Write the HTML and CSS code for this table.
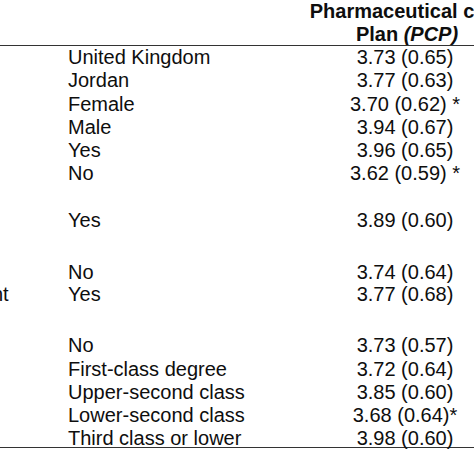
FILE: index.html
```html
<!DOCTYPE html>
<html>
<head>
<meta charset="utf-8">
<link rel="stylesheet" href="styles.css">
</head>
<body>
<div class="table">
  <div class="row head">
    <div class="stub"></div>
    <div class="label"></div>
    <div class="value">Pharmaceutical care<br>Plan <em>(PCP)</em></div>
  </div>
  <div class="row"><div class="stub"></div><div class="label">United Kingdom</div><div class="value">3.73 (0.65)</div></div>
  <div class="row"><div class="stub"></div><div class="label">Jordan</div><div class="value">3.77 (0.63)</div></div>
  <div class="row"><div class="stub"></div><div class="label">Female</div><div class="value">3.70 (0.62) *</div></div>
  <div class="row"><div class="stub"></div><div class="label">Male</div><div class="value">3.94 (0.67)</div></div>
  <div class="row"><div class="stub"></div><div class="label">Yes</div><div class="value">3.96 (0.65)</div></div>
  <div class="row"><div class="stub"></div><div class="label">No</div><div class="value">3.62 (0.59) *</div></div>
  <div class="row blank"></div>
  <div class="row"><div class="stub"></div><div class="label">Yes</div><div class="value">3.89 (0.60)</div></div>
  <div class="row gap"><div class="stub"></div><div class="label">No</div><div class="value">3.74 (0.64)</div></div>
  <div class="row tight"><div class="stub"><span class="cut">nt</span></div><div class="label">Yes</div><div class="value">3.77 (0.68)</div></div>
  <div class="row gap"><div class="stub"></div><div class="label">No</div><div class="value">3.73 (0.57)</div></div>
  <div class="row"><div class="stub"></div><div class="label">First-class degree</div><div class="value">3.72 (0.64)</div></div>
  <div class="row"><div class="stub"></div><div class="label">Upper-second class</div><div class="value">3.85 (0.60)</div></div>
  <div class="row"><div class="stub"></div><div class="label">Lower-second class</div><div class="value">3.68 (0.64)*</div></div>
  <div class="row last"><div class="stub"></div><div class="label">Third class or lower</div><div class="value">3.98 (0.60)</div></div>
</div>
</body>
</html>
```

FILE: styles.css
```css
html, body {
  margin: 0;
  padding: 0;
  background: #ffffff;
  overflow: hidden;
}

body {
  width: 474px;
  height: 474px;
  font-family: "Liberation Sans", Arial, sans-serif;
  font-size: 20px;
  letter-spacing: 0;
  color: #0e0e0e;
}

.table {
  width: 530px;
  border-bottom: 1.6px solid #333333;
}

.row {
  display: grid;
  grid-template-columns: 68px 212px 250px;
  height: 23.3px;
  line-height: 23.3px;
  white-space: nowrap;
}

.stub {
  min-width: 0;
  text-align: left;
}

.cut {
  display: inline-block;
  margin-left: -8px;
}

.label {
  text-align: left;
}

.value {
  text-align: center;
}

.head {
  height: 45px;
  line-height: 22.5px;
  font-weight: bold;
  border-bottom: 1.6px solid #333333;
}

.head .value {
  padding-left: 4px;
}

.head em {
  font-style: italic;
}

.gap {
  margin-top: 28.3px;
}

.tight {
  margin-top: -1.3px;
}

.last {
  height: 20px;
}
```
